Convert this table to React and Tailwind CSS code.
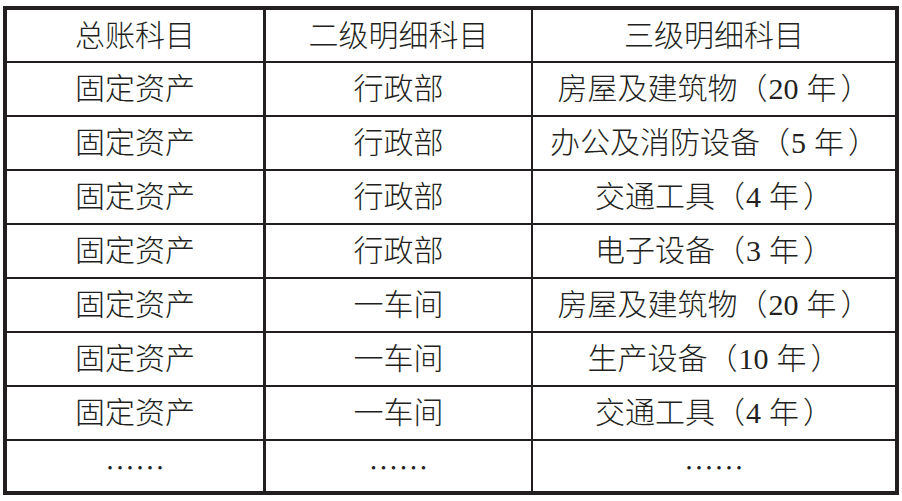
const rows = [
  ["固定资产", "行政部", "房屋及建筑物", "20"],
  ["固定资产", "行政部", "办公及消防设备", "5"],
  ["固定资产", "行政部", "交通工具", "4"],
  ["固定资产", "行政部", "电子设备", "3"],
  ["固定资产", "一车间", "房屋及建筑物", "20"],
  ["固定资产", "一车间", "生产设备", "10"],
  ["固定资产", "一车间", "交通工具", "4"],
];

function Row({ cells, h, last }) {
  const line = last ? "" : "border-b-2 ";
  return (
    <div className="grid grid-cols-[259px_267px_362px]">
      <div className={"flex items-center justify-center border-r-[3px] border-[#231f20] " + line + h}>
        {cells[0]}
      </div>
      <div className={"flex items-center justify-center border-r-2 border-[#231f20] " + line + h}>
        {cells[1]}
      </div>
      <div className={"flex items-center justify-center border-[#231f20] " + line + h}>
        {cells[2]}
      </div>
    </div>
  );
}

function Years({ name, n }) {
  return (
    <span className="whitespace-nowrap">
      {name}
      <span>（</span>
      <span className="ml-[1px]">{n}</span>
      <span className="ml-[8px]">年</span>
      <span className="ml-[4px]">）</span>
    </span>
  );
}

export default function App() {
  return (
    <div className="w-[902px] h-[501px] bg-white pt-[6px] pl-[3px]">
      <div className="w-[896px] border-4 border-[#231f20] text-[30px] font-light leading-none text-[#231f20] font-['Liberation_Serif','Noto_Sans_CJK_SC',serif]">
        <Row h="h-[53px]" cells={["总账科目", "二级明细科目", "三级明细科目"]} />
        {rows.map((r, i) => (
          <Row key={i} h="h-[54px]" cells={[r[0], r[1], <Years name={r[2]} n={r[3]} />]} />
        ))}
        <Row
          last
          h="h-[50px]"
          cells={[
            <span className="font-['Noto_Sans_CJK_SC',sans-serif]">……</span>,
            <span className="font-['Noto_Sans_CJK_SC',sans-serif]">……</span>,
            <span className="font-['Noto_Sans_CJK_SC',sans-serif]">……</span>,
          ]}
        />
      </div>
    </div>
  );
}
